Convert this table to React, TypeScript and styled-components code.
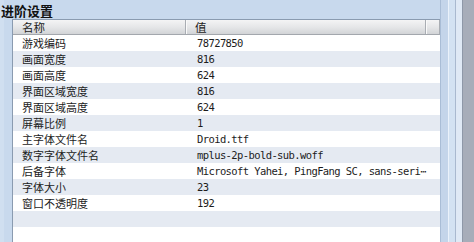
import styled, { createGlobalStyle } from 'styled-components';

// the last value is shown cut off, as in the settings dialog
const settings = [
    { name: '游戏编码', value: '78727850' },
    { name: '画面宽度', value: '816' },
    { name: '画面高度', value: '624' },
    { name: '界面区域宽度', value: '816' },
    { name: '界面区域高度', value: '624' },
    { name: '屏幕比例', value: '1' },
    { name: '主字体文件名', value: 'Droid.ttf' },
    { name: '数字字体文件名', value: 'mplus-2p-bold-sub.woff' },
    { name: '后备字体', value: 'Microsoft Yahei, PingFang SC, sans-seri⋯' },
    { name: '字体大小', value: '23' },
    { name: '窗口不透明度', value: '192' },
];

const App = () => {
    return (
        <>
            <GlobalStyle />
            <Window>
                <Panel>
                    <Title>进阶设置</Title>
                    <Grid>
                        <HeaderRow>
                            <HeaderCell>名称</HeaderCell>
                            <HeaderCell>值</HeaderCell>
                            <HeaderCell />
                        </HeaderRow>
                        {settings.map((item, index) => (
                            <Row key={index} $striped={index % 2 === 1}>
                                <NameCell>{item.name}</NameCell>
                                <ValueCell>{item.value}</ValueCell>
                            </Row>
                        ))}
                        <Row $striped />
                    </Grid>
                </Panel>
                <Splitter />
                <Edge />
            </Window>
        </>
    );
};

const GlobalStyle = createGlobalStyle`
  html, body {
    margin: 0;
    padding: 0;
    background: #cbdcee;
    overflow: hidden;
  }
`;

const Window = styled.div`
  display: flex;
  width: 474px;
  height: 242px;
  overflow: hidden;
  background: #cbdcee;
  font-family: 'Noto Sans CJK SC', 'Noto Sans', sans-serif;
  color: #1c1c1c;
`;

const Panel = styled.div`
  display: flex;
  flex-direction: column;
  width: 428px;
  padding-left: 12px;
  background: linear-gradient(to right, #d0dff0 0 4px, #c8d9ed 4px);
`;

const Title = styled.div`
  height: 19px;
  padding-top: 3px;
  box-sizing: border-box;
  line-height: 15px;
  font-size: 13px;
  font-weight: bold;
  margin-left: -11px;
  color: #111;
`;

const Grid = styled.div`
  flex: 1;
  background: #fff;
  border-top: 1px solid #8a9bb0;
  border-left: 1px solid #8a9bb0;
`;

const HeaderRow = styled.div`
  display: grid;
  grid-template-columns: 173px 240px 1fr;
  height: 14px;
  border-bottom: 1px solid #a3a7ad;
  background: linear-gradient(#f4f4f5, #e4e5e7 55%, #d2d4d7);
`;

const HeaderCell = styled.div`
  padding-left: 9px;
  font-size: 11.5px;
  line-height: 15px;
  border-right: 1px solid #a9adb3;
  box-shadow: inset 1px 0 0 #fafafa;
  overflow: hidden;

  &:first-child {
    box-shadow: none;
  }
`;

const Row = styled.div<{ $striped?: boolean }>`
  display: grid;
  grid-template-columns: 174px 1fr;
  height: 16px;
  background: ${p => (p.$striped ? '#e5eaf2' : '#fff')};
`;

const NameCell = styled.div`
  padding-left: 9px;
  font-size: 11px;
  line-height: 16px;
  white-space: nowrap;
`;

const ValueCell = styled.div`
  padding-left: 10px;
  padding-right: 14px;
  font-family: 'DejaVu Sans Mono', monospace;
  font-size: 10.5px;
  letter-spacing: -0.6px;
  line-height: 16px;
  white-space: nowrap;
  overflow: hidden;
`;

const Splitter = styled.div`
  width: 22px;
  background: linear-gradient(
    to right,
    #a9bdd6 0 1px,
    #c4d5ea 1px 8px,
    #eaf2fb 8px 9px,
    #d3e2f2 9px 15px,
    #a9b9cf 15px 16px,
    #dfe9f5 16px 22px
  );
`;

const Edge = styled.div`
  flex: 1;
  background: linear-gradient(to right, #8e98a8 0 1px, #a7adb9 1px);
`;

export default App;
